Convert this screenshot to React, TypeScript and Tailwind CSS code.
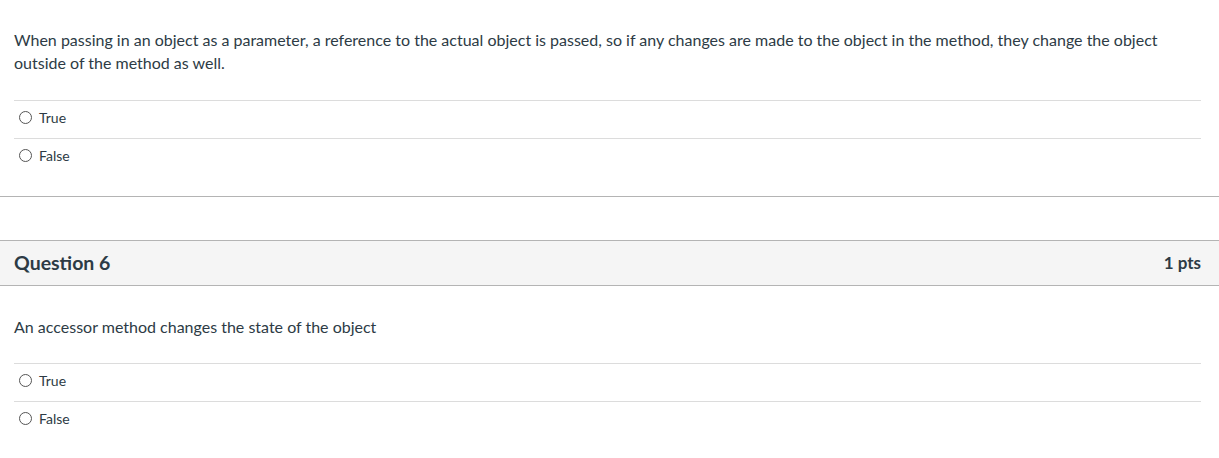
import React from 'react';

type Answer = { id: string; label: string };

const Radio: React.FC<{ name: string; answer: Answer }> = ({ name, answer }) => (
  <label className="flex h-[38px] items-center border-t border-[#dcdcdc] pb-[4px] pl-[5px] text-[14px] text-[#2d3b45]">
    <span className="mr-[7px] h-[13px] w-[13px] rounded-full border border-[#555] bg-white" />
    <input type="radio" name={name} value={answer.id} className="hidden" />
    {answer.label}
  </label>
);

const answers: Answer[] = [
  { id: 'true', label: 'True' },
  { id: 'false', label: 'False' },
];

export default function App() {
  return (
    <div className="min-h-screen w-full bg-white font-['Lato','Liberation_Sans',sans-serif] text-[#2d3b45]">
      {/* Previous question body (tail) */}
      <div className="border-b border-[#b4b4b4] pb-[20px] pt-[28px]">
        <div className="pl-[14px] pr-[18px]">
          <p className="mb-[26px] text-[16px] leading-[23px]">
            When passing in an object as a parameter, a reference to the actual object is passed, so if any changes are made to the object in the method, they change the object outside of the method as well.
          </p>
          {answers.map((a) => (
            <Radio key={a.id} name="q5" answer={a} />
          ))}
        </div>
      </div>

      {/* Question 6 */}
      <div className="mt-[43px]">
        <div className="flex h-[46px] items-center justify-between border-y border-[#b4b4b4] bg-[#f5f5f5] pl-[14px] pr-[18px]">
          <h2 className="text-[19.5px] font-bold">Question 6</h2>
          <span className="text-[17px] font-bold">1 pts</span>
        </div>
        <div className="pl-[14px] pr-[18px] pt-[29px]">
          <p className="mb-[25px] text-[16px] leading-[23px]">An accessor method changes the state of the object</p>
          {answers.map((a) => (
            <Radio key={a.id} name="q6" answer={a} />
          ))}
        </div>
      </div>
    </div>
  );
}
